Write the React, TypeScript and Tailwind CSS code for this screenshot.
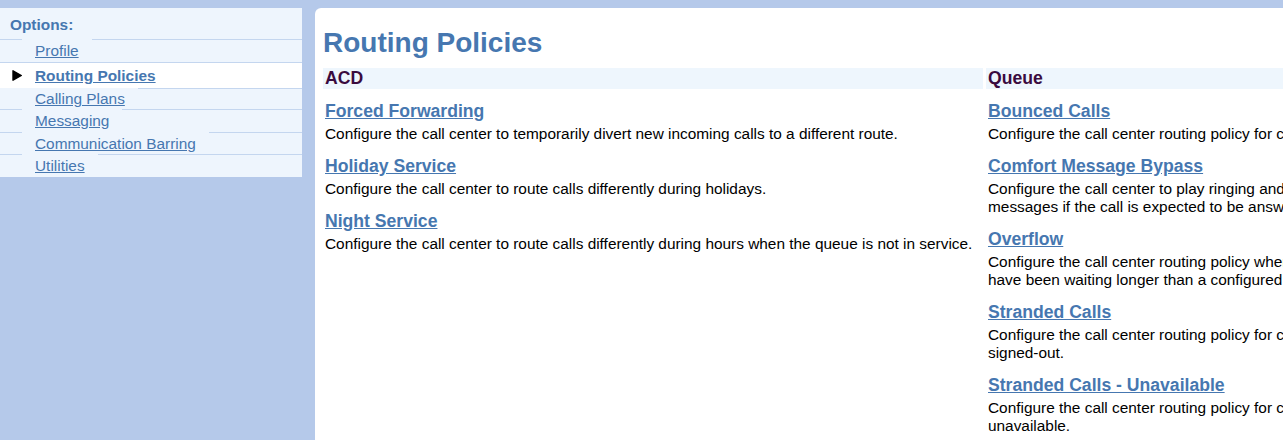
const navItems = [
  { label: 'Profile', h: 'h-[23px]' },
  { label: 'Routing Policies', h: 'h-[26px]', active: true },
  { label: 'Calling Plans', h: 'h-[21px]', afterActive: true },
  { label: 'Messaging', h: 'h-[23px]' },
  { label: 'Communication Barring', h: 'h-[22px]' },
  { label: 'Utilities', h: 'h-[23px]' },
];

type Item = { title: string; lines: string[] };

// line breaks follow the fixed width of the original table cells
const acd: Item[] = [
  {
    title: 'Forced Forwarding',
    lines: ['Configure the call center to temporarily divert new incoming calls to a different route.'],
  },
  {
    title: 'Holiday Service',
    lines: ['Configure the call center to route calls differently during holidays.'],
  },
  {
    title: 'Night Service',
    lines: ['Configure the call center to route calls differently during hours when the queue is not in service.'],
  },
];

const queue: Item[] = [
  {
    title: 'Bounced Calls',
    lines: ['Configure the call center routing policy for calls bounced from agents.'],
  },
  {
    title: 'Comfort Message Bypass',
    lines: [
      'Configure the call center to play ringing and not comfort',
      'messages if the call is expected to be answered quickly.',
    ],
  },
  {
    title: 'Overflow',
    lines: [
      'Configure the call center routing policy when calls',
      'have been waiting longer than a configured time.',
    ],
  },
  {
    title: 'Stranded Calls',
    lines: ['Configure the call center routing policy for calls when all agents are', 'signed-out.'],
  },
  {
    title: 'Stranded Calls - Unavailable',
    lines: ['Configure the call center routing policy for calls when all agents are', 'unavailable.'],
  },
];

const Column = ({ heading, items, width }: { heading: string; items: Item[]; width: string }) => (
  <div className={`${width} shrink-0`}>
    <div className="h-[21px] bg-[#eef6fd] px-[2px] text-[17.6px] font-bold leading-[21px] text-[#3a0b3f]">
      {heading}
    </div>
    <div className="mt-[12px] pl-[2px]">
      {items.map((item) => (
        <div key={item.title} className="mb-[13px]">
          <a href="#" className="block w-max text-[17.6px] font-bold leading-[20px] text-[#4677b0] underline">
            {item.title}
          </a>
          <p className="mt-[4px] whitespace-nowrap text-[15.4px] leading-[18px] text-black">
            {item.lines.map((line, i) => (
              <span key={i} className="block">
                {line}
              </span>
            ))}
          </p>
        </div>
      ))}
    </div>
  </div>
);

export default function App() {
  return (
    <div className="flex h-[440px] w-full overflow-hidden bg-[#b5c9ea] pt-2 font-['Liberation_Sans',Arial,sans-serif]">
      <aside className="w-[302px] shrink-0 self-start bg-[#eef5fd]">
        <div className="h-[31px] pl-[10px] pt-[8px] text-[15.4px] font-bold leading-[17px] text-[#4677b0]">Options:</div>
        {navItems.map((item) =>
          item.active ? (
            <div key={item.label} className={`flex ${item.h} items-center border-t border-[#c4d6ef] bg-white`}>
              <svg className="ml-[12px] h-[11px] w-[10px]" viewBox="0 0 10 11">
                <path d="M1 0.8 L9.3 5.5 L1 10.2 Z" fill="#000" stroke="#000" strokeWidth="1.4" strokeLinejoin="round" />
              </svg>
              <a href="#" className="ml-[13px] text-[15.4px] font-bold leading-[17px] text-[#4677b0] underline">
                {item.label}
              </a>
            </div>
          ) : (
            <div key={item.label} className={`flex ${item.h} items-center border-t border-[#c4d6ef]`}>
              <span
                className={`-mt-px flex h-[calc(100%+1px)] items-center bg-[#eef5fd] pr-[13px] ${
                  item.afterActive ? 'pl-[35px]' : 'ml-[22px] pl-[13px]'
                }`}
              >
                <a href="#" className="text-[15.4px] leading-[17px] text-[#4677b0] underline">
                  {item.label}
                </a>
              </span>
            </div>
          ),
        )}
      </aside>
      <main className="ml-[13px] min-w-0 flex-1 rounded-tl-[6px] bg-white pl-[8px] pt-[19px]">
        <h1 className="mb-[9px] text-[28px] font-bold leading-[32px] text-[#4677b0]">Routing Policies</h1>
        <div className="flex gap-[3px]">
          <Column heading="ACD" items={acd} width="w-[660px]" />
          <Column heading="Queue" items={queue} width="w-[530px]" />
        </div>
      </main>
    </div>
  );
}
